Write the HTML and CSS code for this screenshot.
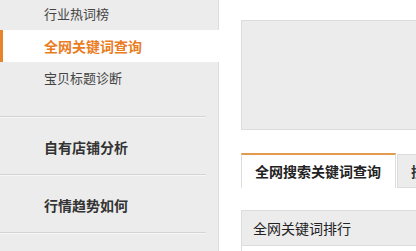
FILE: index.html
```html
<!DOCTYPE html>
<html lang="zh-CN">
<head>
    <meta charset="UTF-8">
    <title>全网关键词查询</title>
    <link rel="stylesheet" href="styles.css">
</head>
<body>
    <div class="page">
        <div class="sidebar">
            <ul class="sub-list">
                <li class="sub-item">行业热词榜</li>
                <li class="sub-item active">全网关键词查询</li>
                <li class="sub-item">宝贝标题诊断</li>
            </ul>
            <div class="section">自有店铺分析</div>
            <div class="section">行情趋势如何</div>
            <div class="section last"></div>
        </div>

        <div class="main">
            <div class="search-box"></div>

            <div class="tabs">
                <div class="tab active">全网搜索关键词查询</div>
                <div class="tab">搜索词趋势分析</div>
            </div>

            <div class="panel">
                <div class="panel-head">全网关键词排行</div>
                <div class="panel-body"></div>
            </div>
        </div>
    </div>
</body>
</html>
```

FILE: styles.css
```css
* {
    margin: 0;
    padding: 0;
    box-sizing: border-box;
}

html, body {
    background: #fff;
    overflow: hidden;
}

body {
    font-family: 'Noto Sans CJK SC', 'Noto Sans', sans-serif;
    color: #333;
}

.page {
    display: flex;
    width: 900px;
    height: 251px;
}

/* 左侧菜单 */
.sidebar {
    width: 219px;
    flex-shrink: 0;
    background: #ececec;
    border-right: 1px solid #dcdcdc;
}

.sub-list {
    list-style: none;
    margin-top: -2px;
    padding-bottom: 22px;
}

.sub-item {
    height: 32px;
    line-height: 32px;
    padding-left: 44px;
    font-size: 13px;
    color: #444;
}

.sub-item.active {
    background: #fff;
    margin-right: -1px;
    border-left: 3px solid #e8842a;
    padding-left: 41px;
    color: #ea7d1f;
    font-weight: bold;
    font-size: 14px;
}

.section {
    height: 58px;
    line-height: 60px;
    margin-right: 12px;
    padding-left: 44px;
    border-top: 1px solid #d4d4d4;
    box-shadow: inset 0 1px 0 #f6f6f6;
    font-size: 14px;
    font-weight: bold;
    color: #333;
}

/* 右侧内容 */
.main {
    flex: 1;
    padding: 20px 0 0 22px;
}

.search-box {
    height: 110px;
    background: #ececec;
    border: 1px solid #dcdcdc;
}

.tabs {
    display: flex;
    align-items: flex-end;
    margin-top: 23px;
    height: 35px;
}

.tab {
    height: 34px;
    line-height: 33px;
    padding: 0 13px;
    white-space: nowrap;
    font-size: 14px;
    font-weight: bold;
    background: #ececec;
    border: 1px solid #dcdcdc;
    margin-left: 1px;
}

.tab.active {
    height: 35px;
    margin-left: 0;
    padding: 0 14px 0 13px;
    background: #fff;
    border: 1px solid #dcdcdc;
    border-top: 2px solid #e39a4e;
    border-bottom: none;
    color: #222;
}

.panel {
    margin-top: 22px;
    border: 1px solid #dcdcdc;
}

.panel-head {
    height: 35px;
    line-height: 34px;
    padding-left: 11px;
    background: #ececec;
    border-bottom: 1px solid #dcdcdc;
    font-size: 14px;
    color: #222;
}

.panel-body {
    height: 40px;
    background: #fff;
}
```
